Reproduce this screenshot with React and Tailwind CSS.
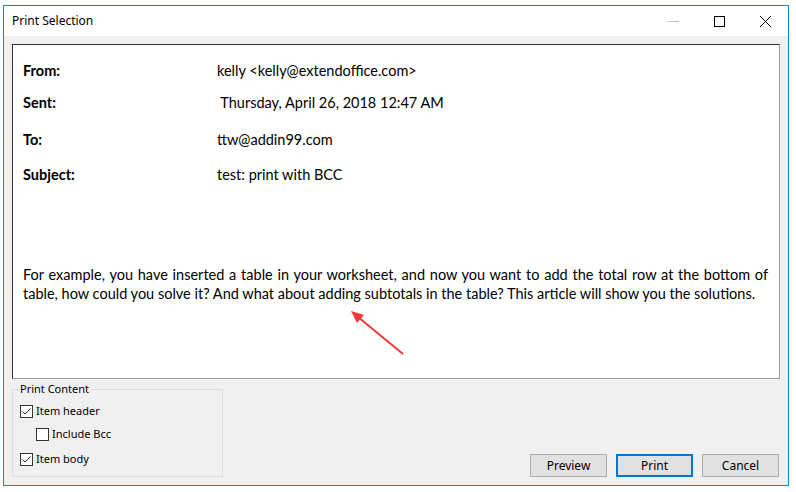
import React from 'react';

const ui = { fontFamily: '"Noto Sans", "Open Sans", sans-serif' };
const doc = { fontFamily: 'Lato, "Liberation Sans", sans-serif' };

function HeaderRow({ label, value, className = '' }) {
  return (
    <div className={`flex items-center h-[18px] ${className}`}>
      <div className="w-[194px] font-bold">{label}</div>
      <div className="whitespace-pre">{value}</div>
    </div>
  );
}

function Check({ checked }) {
  return (
    <svg width="13" height="13" viewBox="0 0 13 13" className="shrink-0">
      <rect x="0.5" y="0.5" width="12" height="12" fill="#fff" stroke="#333" />
      {checked && <path d="M2.5 6.5 L5 9 L10.5 3.5" fill="none" stroke="#333" strokeWidth="1" />}
    </svg>
  );
}

function Btn({ children, primary }) {
  return (
    <button
      className={`w-[77px] h-[23px] bg-[#e1e1e1] text-[12px] text-black ${primary ? 'border-2 border-[#0078d7]' : 'border border-[#adadad]'}`}
      style={ui}
    >
      {children}
    </button>
  );
}

export default function App() {
  return (
    <div className="w-[796px] h-[492px] bg-white overflow-hidden pt-[5px] pl-[3px]">
      <div className="w-[786px] h-[481px] border border-[#1883d7] flex flex-col">
        <div className="h-[30px] bg-white flex items-center shrink-0" style={ui}>
          <div className="pl-[8px] text-[12px] text-black">Print Selection</div>
          <div className="ml-auto flex items-center h-full">
            <svg width="46" height="30" viewBox="0 0 46 30">
              <line x1="18" y1="15.5" x2="29" y2="15.5" stroke="#c4c4c4" />
            </svg>
            <svg width="46" height="30" viewBox="0 0 46 30">
              <rect x="18.5" y="10.5" width="10" height="10" fill="none" stroke="#000" />
            </svg>
            <svg width="46" height="30" viewBox="0 0 46 30">
              <path d="M18 10 L29 21 M29 10 L18 21" stroke="#000" />
            </svg>
          </div>
        </div>
        <div className="flex-1 bg-[#f0f0f0] px-[8px] pt-[8px] flex flex-col">
          <div
            className="relative h-[335px] bg-white border-t border-l border-t-[#333] border-l-[#333] border-r border-b border-r-[#a0a0a0] border-b-[#a0a0a0] text-[14.5px] text-black px-[10px]"
            style={doc}
          >
            <HeaderRow label="From:" value="kelly <kelly@extendoffice.com>" className="mt-[17px]" />
            <HeaderRow label="Sent:" value=" Thursday, April 26, 2018 12:47 AM" className="mt-[14px]" />
            <HeaderRow label="To:" value="ttw@addin99.com" className="mt-[19px]" />
            <HeaderRow label="Subject:" value="test: print with BCC" className="mt-[17px]" />
            <p className="mt-[81px] text-justify leading-[19px] pr-[1px]">
              For example, you have inserted a table in your worksheet, and now you want to add the total row at the bottom of table, how could you solve it? And what about adding subtotals in the table? This article will show you the solutions.
            </p>
            <svg className="absolute left-0 top-0" width="768" height="334" viewBox="0 0 768 334">
              <line x1="390" y1="309" x2="345" y2="272" stroke="#ee3a3a" strokeWidth="2" />
              <polygon points="338,266 351,270 344,278" fill="#ee3a3a" />
            </svg>
          </div>
          <div className="flex items-end flex-1 pb-[8px]">
            <fieldset className="w-[211px] h-[95px] border border-[#dcdcdc] mt-[3px] self-start" style={ui}>
              <legend className="ml-[5px] px-[2px] text-[11px] text-black leading-[14px]">Print Content</legend>
              <div className="flex flex-col text-[11px] text-black pl-[7px] pt-[9px]">
                <label className="flex items-center gap-[3px] h-[13px]"><Check checked />Item header</label>
                <label className="flex items-center gap-[3px] h-[13px] mt-[10px] pl-[16px]"><Check />Include Bcc</label>
                <label className="flex items-center gap-[3px] h-[13px] mt-[12px]"><Check checked />Item body</label>
              </div>
            </fieldset>
            <div className="ml-auto flex gap-[9px] mr-[1px]">
              <Btn>Preview</Btn>
              <Btn primary>Print</Btn>
              <Btn>Cancel</Btn>
            </div>
          </div>
        </div>
      </div>
    </div>
  );
}
